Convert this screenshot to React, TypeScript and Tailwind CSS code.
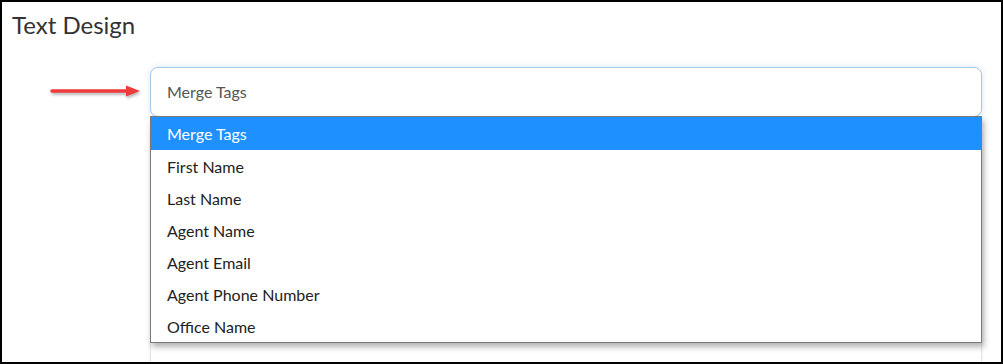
import React from "react";

const items = [
  "First Name",
  "Last Name",
  "Agent Name",
  "Agent Email",
  "Agent Phone Number",
  "Office Name",
];

export default function App() {
  return (
    <div
      className="w-[1003px] h-[364px] border-2 border-black bg-white overflow-hidden box-border"
      style={{ fontFamily: "Lato, 'Open Sans', sans-serif" }}
    >
      <h1 className="pl-[10px] pt-[7px] text-[24px] leading-[32px] text-[#333] font-normal">
        Text Design
      </h1>
      <div className="flex mt-[26px]">
        <div className="w-[148px] flex items-start pt-[16px] pl-[48px]">
          <svg width="92" height="16" viewBox="0 0 92 16" className="drop-shadow-[1px_2px_1.5px_rgba(0,0,0,0.3)]">
            <line x1="2" y1="8" x2="78" y2="8" stroke="#ef3b3b" strokeWidth="3.5" strokeLinecap="round" />
            <polygon points="76,2.5 90,8 76,13.5" fill="#ef3b3b" />
          </svg>
        </div>
        <div className="relative w-[832px]">
          <div className="h-[50px] rounded-[8px] border border-[#a9c8e6] shadow-[0_0_6px_rgba(120,170,220,0.3)] flex items-center pl-[16px] text-[16px] text-[#555] bg-white">
            Merge Tags
          </div>
          <div className="mt-[14px] h-[260px] border-x border-[#e4e4e4] shadow-[0_0_4px_rgba(0,0,0,0.05)]" />
          <div className="absolute left-0 top-[49px] w-[832px] border border-[#7a7a7a] bg-white shadow-[2px_4px_6px_rgba(0,0,0,0.3)]">
            <div className="h-[33px] bg-[#1e90ff] text-white text-[16px] flex items-center pl-[16px] pt-[1px]">
              Merge Tags
            </div>
            {items.map((it) => (
              <div key={it} className="h-[32px] text-[16px] text-[#222] flex items-center pl-[16px] pt-[2px]">
                {it}
              </div>
            ))}
          </div>
        </div>
      </div>
    </div>
  );
}
